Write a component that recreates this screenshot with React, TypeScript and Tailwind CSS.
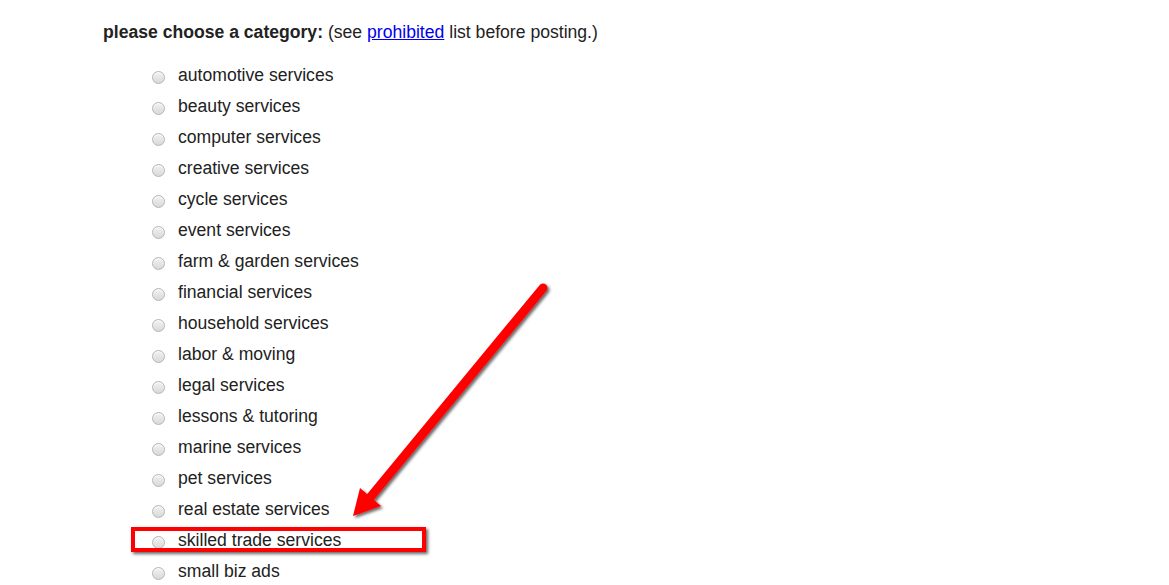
import React from "react";

const items = [
  "automotive services",
  "beauty services",
  "computer services",
  "creative services",
  "cycle services",
  "event services",
  "farm & garden services",
  "financial services",
  "household services",
  "labor & moving",
  "legal services",
  "lessons & tutoring",
  "marine services",
  "pet services",
  "real estate services",
  "skilled trade services",
  "small biz ads",
];

function Radio() {
  return (
    <span className="mt-[7px] inline-block h-[13px] w-[13px] shrink-0 rounded-full border border-[#b5b5b5] bg-gradient-to-b from-[#f2f2f2] to-[#d9d9d9] shadow-[inset_0_1px_1px_rgba(255,255,255,0.8)]" />
  );
}

export default function App() {
  return (
    <div
      className="relative h-[585px] w-[1169px] overflow-hidden bg-white text-[17.6px] text-[#222]"
      style={{ fontFamily: '"Liberation Sans", Arial, sans-serif' }}
    >
      <div className="pl-[103px] pt-[21px]">
        <div className="leading-[22px]">
          <span className="font-bold">please choose a category:</span> (see{" "}
          <a className="text-[#0000ee] underline">prohibited</a> list before posting.)
        </div>
        <ul className="mt-[21px] pl-[49px]">
          {items.map((t) => (
            <li key={t} className="flex h-[31px] items-start gap-[13px]">
              <Radio />
              <span className="leading-[22px]">{t}</span>
            </li>
          ))}
        </ul>
      </div>

      <div className="absolute left-[131px] top-[527px] h-[25px] w-[295px] border-[4px] border-[#ff0000] shadow-[2px_2px_3px_rgba(0,0,0,0.6)]" />

      <svg
        className="pointer-events-none absolute left-0 top-0"
        width="1169"
        height="585"
        viewBox="0 0 1169 585"
      >
        <defs>
          <filter id="sh" x="-20%" y="-20%" width="140%" height="140%">
            <feDropShadow dx="2" dy="2" stdDeviation="1.5" floodColor="#000" floodOpacity="0.6" />
          </filter>
        </defs>
        <g filter="url(#sh)">
          <line x1="543" y1="288" x2="368" y2="500" stroke="#ff0000" strokeWidth="9" strokeLinecap="round" />
          <polygon points="353,516 360,488 381,506" fill="#ff0000" />
        </g>
      </svg>
    </div>
  );
}
